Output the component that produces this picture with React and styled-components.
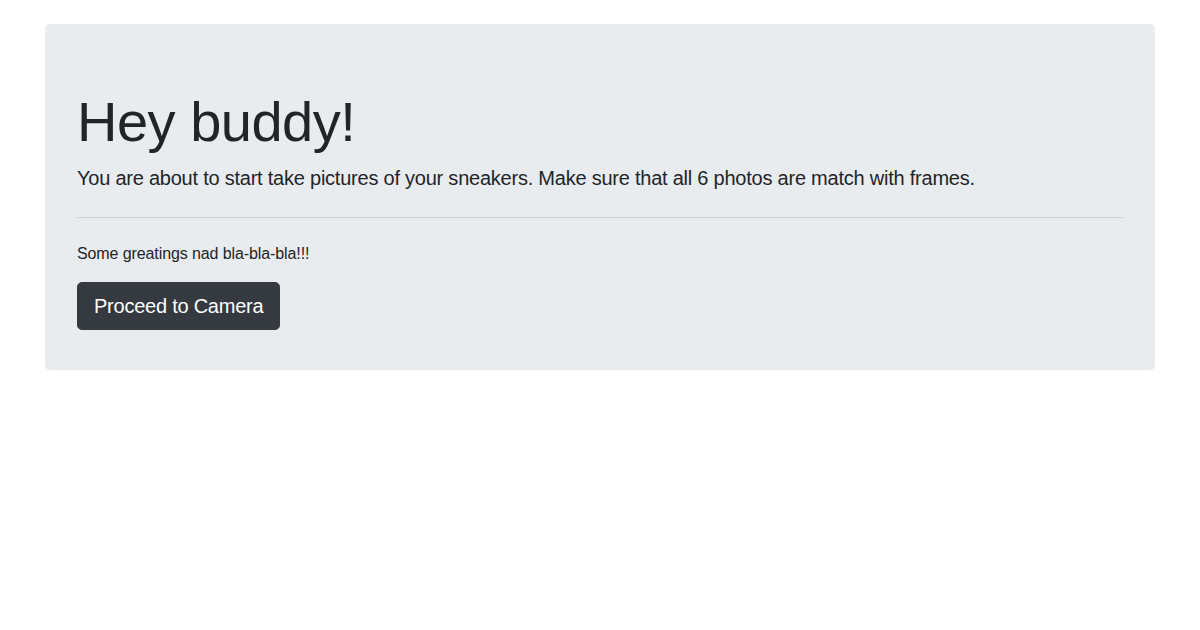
import React from "react";
import styled, { createGlobalStyle } from "styled-components";

const GlobalStyle = createGlobalStyle`
  *, *::before, *::after {
    box-sizing: border-box;
  }
  body {
    margin: 0;
    background: #fff;
    color: #212529;
    font-family: "Liberation Sans", Arial, sans-serif;
    font-size: 16px;
    line-height: 1.5;
  }
`;

const Container = styled.div`
  max-width: 1140px;
  margin: 24px auto 0;
  padding: 0 15px;
`;

const Jumbotron = styled.div`
  background: #e9ecef;
  border-radius: 4.8px;
  padding: 64px 32px 40px;
`;

const Title = styled.h1`
  margin: 0 0 8px;
  font-size: 56px;
  font-weight: 300;
  line-height: 1.2;
  letter-spacing: -0.5px;
`;

const Lead = styled.p`
  margin: 0;
  font-size: 20px;
  font-weight: 300;
  line-height: 1.5;
  letter-spacing: -0.23px;
`;

const Divider = styled.hr`
  margin: 24px 0;
  border: 0;
  border-top: 1px solid rgba(0, 0, 0, 0.1);
`;

const Text = styled.p`
  margin: 0 0 16px;
  letter-spacing: -0.1px;
`;

const Button = styled.a`
  display: inline-block;
  padding: 8px 16px;
  font-size: 20px;
  line-height: 1.5;
  letter-spacing: -0.24px;
  color: #fff;
  background: #343a40;
  border: 1px solid #343a40;
  border-radius: 4.8px;
  text-decoration: none;
  cursor: pointer;

  &:hover {
    background: #23272b;
  }
`;

const App = () => {
  return (
    <>
      <GlobalStyle />
      <Container>
        <Jumbotron>
          <Title>Hey buddy!</Title>
          <Lead>
            You are about to start take pictures of your sneakers. Make sure
            that all 6 photos are match with frames.
          </Lead>
          <Divider />
          <Text>Some greatings nad bla-bla-bla!!!</Text>
          <Button href="#">Proceed to Camera</Button>
        </Jumbotron>
      </Container>
    </>
  );
};

export default App;
